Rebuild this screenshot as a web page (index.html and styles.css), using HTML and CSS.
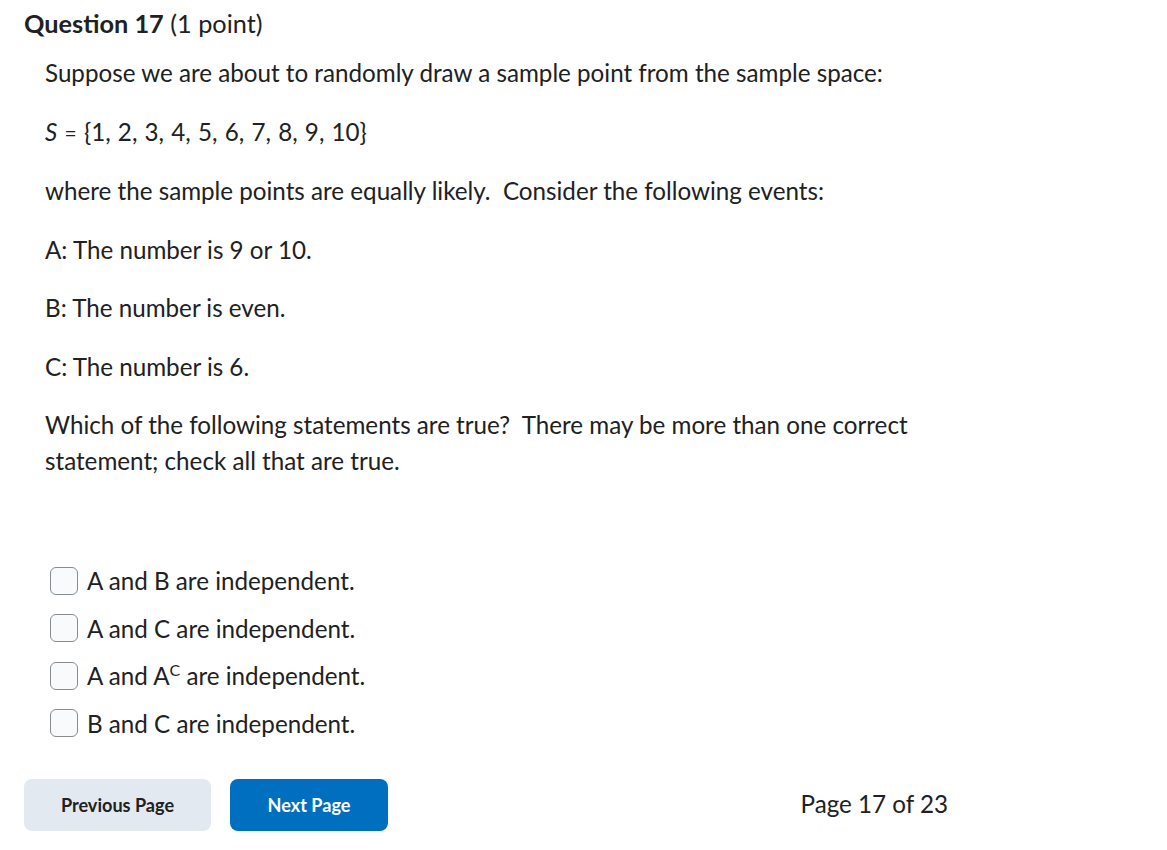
FILE: index.html
```html
<!DOCTYPE html>
<html>
<head>
<meta charset="utf-8">
<link rel="stylesheet" href="styles.css">
</head>
<body>
<div class="page">
  <h2 class="qtitle"><strong>Question 17</strong> <span class="pts">(1 point)</span></h2>
  <div class="qbody">
    <p>Suppose we are about to randomly draw a sample point from the sample space:</p>
    <p class="set"><em>S</em> <span class="eq">=</span> {1, 2, 3, 4, 5, 6, 7, 8, 9, 10}</p>
    <p>where the sample points are equally likely.&nbsp; Consider the following events:</p>
    <p>A: The number is 9 or 10.</p>
    <p>B: The number is even.</p>
    <p>C: The number is 6.</p>
    <p>Which of the following statements are true?&nbsp; There may be more than one correct statement; check all that are true.</p>
    <ul class="options">
      <li><span class="box"></span><span>A and B are independent.</span></li>
      <li><span class="box"></span><span>A and C are independent.</span></li>
      <li><span class="box"></span><span>A and A<sup>C</sup> are independent.</span></li>
      <li><span class="box"></span><span>B and C are independent.</span></li>
    </ul>
  </div>
  <div class="footer">
    <button class="btn btn-prev">Previous Page</button>
    <button class="btn btn-next">Next Page</button>
    <span class="pageinfo">Page 17 of 23</span>
  </div>
</div>
</body>
</html>
```
FILE: styles.css
```css
html, body {
  margin: 0;
  padding: 0;
  background: #ffffff;
}
body {
  font-family: Lato, "Liberation Sans", sans-serif;
  color: #202122;
}
.page {
  padding: 7px 0 0 24px;
  width: 924px;
}
.qtitle {
  margin: 0;
  font-size: 25.3px;
  font-weight: 400;
  line-height: 32px;
}
.qtitle strong {
  font-weight: 700;
}
.qbody {
  padding-left: 21px;
  font-size: 24.2px;
  line-height: 35.5px;
}
.qbody p {
  margin: 23px 0 0 0;
}
.qbody p:first-child {
  margin-top: 16px;
}
.set {
  word-spacing: 1px;
}
.eq {
  font-size: 21px;
}
.options {
  list-style: none;
  margin: 79px 0 0 0;
  padding: 0 0 0 5px;
}
.options li {
  display: flex;
  align-items: center;
  gap: 9px;
  height: 47.5px;
}
.box {
  width: 26px;
  height: 26px;
  border: 1.5px solid #878c91;
  border-radius: 6px;
  background: #f9fafc;
  flex: none;
}
sup {
  font-size: 16px;
  line-height: 0;
  vertical-align: 9px;
}
.footer {
  display: flex;
  align-items: center;
  margin-top: 32px;
}
.btn {
  font-family: Lato, "Liberation Sans", sans-serif;
  font-weight: 700;
  font-size: 18.1px;
  height: 52px;
  border: none;
  border-radius: 8px;
  padding: 0;
  cursor: pointer;
}
.btn-prev {
  width: 187px;
  background: #e3e9f1;
  color: #202122;
}
.btn-next {
  width: 158px;
  background: #006fbf;
  color: #ffffff;
  margin-left: 19px;
}
.pageinfo {
  margin-left: auto;
  font-size: 24.2px;
  padding-bottom: 4px;
}
```
